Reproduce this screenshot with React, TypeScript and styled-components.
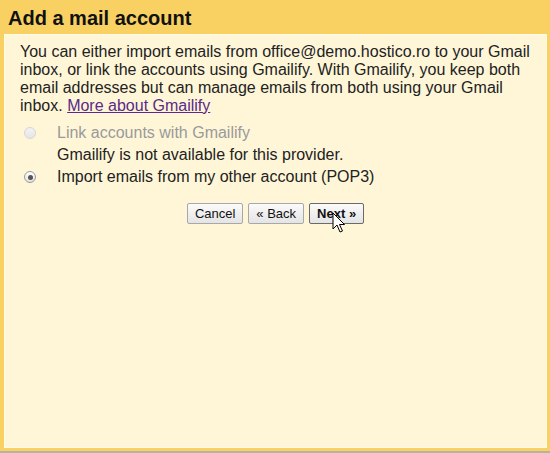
import styled, { createGlobalStyle } from 'styled-components'

const GlobalStyle = createGlobalStyle`
	html, body {
		margin: 0;
		padding: 0;
		height: 100%;
	}
	body {
		background: #f9d163;
		font-family: 'Liberation Sans', Arial, sans-serif;
		color: #222;
	}
	#root {
		height: 100%;
	}
`

const Window = styled.div`
	box-sizing: border-box;
	height: 453px;
	display: flex;
	flex-direction: column;
	background: #f9d163;
	border-bottom: 2px solid #b5b3a8;
`
const Title = styled.h1`
	margin: 0;
	padding: 6px 8px 0;
	height: 28px;
	font-size: 20px;
	font-weight: bold;
	color: #111;
	line-height: 24px;
`
const Panel = styled.div`
	flex: 1;
	margin: 0 3px 3px 4px;
	background: #fff6d8;
	border: 1px solid #fffbe8;
	padding: 8px 15px 6px;
	font-size: 16px;
	line-height: 18px;
	color: #222;
`
const Intro = styled.p`
	margin: 0;
`
const Link = styled.a`
	color: #5b2a88;
	text-decoration: underline;
`
const Options = styled.div`
	margin-top: 9px;
	display: flex;
	flex-direction: column;
	gap: 4px;
`
const OptionRow = styled.label<{ $disabled?: boolean }>`
	display: flex;
	align-items: center;
	color: ${(p) => (p.$disabled ? '#9a9a9a' : '#222')};
`
const RadioWrap = styled.span`
	box-sizing: border-box;
	width: 37px;
	display: flex;
	padding-left: 4px;
`
const Radio = styled.span<{ $checked?: boolean; $disabled?: boolean }>`
	box-sizing: border-box;
	width: 12px;
	height: 12px;
	border-radius: 50%;
	border: 1px solid ${(p) => (p.$disabled ? '#d6d6d6' : '#9a9a9a')};
	background: ${(p) =>
		p.$disabled
			? 'linear-gradient(#f3f3f3, #e6e6e6)'
			: 'linear-gradient(#ffffff, #e2e2e2)'};
	display: flex;
	align-items: center;
	justify-content: center;
	&::after {
		content: '';
		display: ${(p) => (p.$checked ? 'block' : 'none')};
		width: 5px;
		height: 5px;
		border-radius: 50%;
		background: #555;
	}
`
const Note = styled.div`
	padding-left: 37px;
`
const Buttons = styled.div`
	position: relative;
	margin-top: 17px;
	display: flex;
	justify-content: center;
	gap: 5px;
`
const Button = styled.button<{ $primary?: boolean }>`
	box-sizing: border-box;
	height: 21px;
	padding: 0 7px;
	font-family: 'Liberation Sans', Arial, sans-serif;
	font-size: 13px;
	font-weight: ${(p) => (p.$primary ? 'bold' : 'normal')};
	color: #111;
	background: linear-gradient(#fbfbfb, #e4e4e4);
	border: 1px solid ${(p) => (p.$primary ? '#6a6a6a' : '#a8a8a8')};
	border-radius: 2px;
	cursor: default;
`
const Cursor = styled.svg`
	position: absolute;
	left: 312px;
	top: 9px;
	pointer-events: none;
`

export default function App() {
	return (
		<>
			<GlobalStyle />
			<Window>
				<Title>Add a mail account</Title>
				<Panel>
					<Intro>
						You can either import emails from office@demo.hostico.ro to your Gmail
						inbox, or link the accounts using Gmailify. With Gmailify, you keep both
						email addresses but can manage emails from both using your Gmail
						inbox. <Link href="#">More about Gmailify</Link>
					</Intro>
					<Options>
						<OptionRow $disabled>
							<RadioWrap>
								<Radio $disabled />
							</RadioWrap>
							Link accounts with Gmailify
						</OptionRow>
						<Note>Gmailify is not available for this provider.</Note>
						<OptionRow>
							<RadioWrap>
								<Radio $checked />
							</RadioWrap>
							Import emails from my other account (POP3)
						</OptionRow>
					</Options>
					<Buttons>
						<Button>Cancel</Button>
						<Button>« Back</Button>
						<Button $primary>Next »</Button>
						<Cursor width="14" height="22" viewBox="0 0 14 22">
							<path
								d="M1 1 L1 17 L5 13 L8 20 L10.5 19 L7.5 12.5 L12.5 12.5 Z"
								fill="#fff"
								stroke="#000"
								strokeWidth="1"
								strokeLinejoin="round"
							/>
						</Cursor>
					</Buttons>
				</Panel>
			</Window>
		</>
	)
}
